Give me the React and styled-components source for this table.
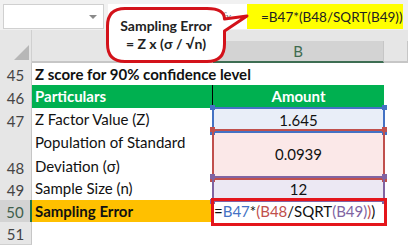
import React from 'react';
import styled, { createGlobalStyle } from 'styled-components';

const GlobalStyle = createGlobalStyle`
  html, body {
    margin: 0;
    padding: 0;
    background: #fff;
  }
  body {
    width: 408px;
    height: 245px;
    overflow: hidden;
  }
`;

const FONT = '"Lato", "Open Sans", "Liberation Sans", sans-serif';
const COLS = '32px 181px 171px 24px';

const Sheet = styled.div`
  position: relative;
  width: 408px;
  height: 245px;
  overflow: hidden;
  background: #fff;
  font-family: ${FONT};
  color: #111;
`;

const FormulaBar = styled.div`
  height: 40px;
  box-sizing: border-box;
  padding: 4px 5px 0 3px;
  display: flex;
  align-items: flex-start;
  background: #f1f1f1;
`;

const NameBox = styled.div`
  width: 101px;
  height: 25px;
  box-sizing: border-box;
  background: #fff;
  border: 1px solid #d0d0d0;
  display: flex;
  align-items: center;
  justify-content: flex-end;
  padding-right: 6px;
`;

const Arrow = styled.span`
  width: 0;
  height: 0;
  border-left: 4px solid transparent;
  border-right: 4px solid transparent;
  border-top: 4px solid #8a8a8a;
`;

const FxZone = styled.div`
  flex: 1;
  height: 25px;
  margin-left: 4px;
  background: #fff;
  display: flex;
  align-items: center;
  justify-content: flex-end;
  padding-right: 16px;
`;

const Fx = styled.span`
  font-family: "Liberation Serif", serif;
  font-style: italic;
  font-size: 13px;
  color: #7a7a7a;
`;

const FormulaInput = styled.div`
  width: 156px;
  height: 25px;
  box-sizing: border-box;
  background: #ffff00;
  display: flex;
  align-items: center;
  padding-left: 14px;
  font-size: 13.5px;
  color: #222;
  white-space: nowrap;
`;

const Grid = styled.div`
  display: grid;
  grid-template-columns: ${COLS};
  height: ${(p) => p.$h}px;
`;

const HeaderRow = styled(Grid)`
  background: #e6e6e6;
  margin-top: -10px;
  height: 33px;
  align-items: end;
`;

const Corner = styled.div`
  height: 33px;
  display: flex;
  align-items: flex-end;
  justify-content: flex-end;
  padding: 0 2px 3px 0;
  box-sizing: border-box;
  border-right: 1px solid #d0d0d0;
`;

const ColHead = styled.div`
  height: 22px;
  box-sizing: border-box;
  display: flex;
  align-items: center;
  justify-content: center;
  font-size: 15px;
  background: ${(p) => (p.$active ? '#d3d3d3' : '#e6e6e6')};
  color: ${(p) => (p.$active ? '#3f6b50' : '#444')};
  border-bottom: 2px solid ${(p) => (p.$active ? '#3e6e53' : '#c6c6c6')};
  border-right: 1px solid #c6c6c6;
`;

const RowHead = styled.div`
  box-sizing: border-box;
  display: flex;
  align-items: flex-end;
  justify-content: center;
  padding-bottom: 1px;
  font-size: 15px;
  color: ${(p) => (p.$active ? '#3f5f4c' : '#444')};
  background: ${(p) => (p.$active ? '#d3d3d3' : '#e6e6e6')};
  border-right: ${(p) => (p.$active ? '2px solid #217346' : '1px solid #c6c6c6')};
  border-bottom: 1px solid #d0d0d0;
`;

const Cell = styled.div`
  position: relative;
  box-sizing: border-box;
  display: flex;
  align-items: ${(p) => (p.$bottom ? 'flex-end' : 'center')};
  justify-content: ${(p) => (p.$center ? 'center' : 'flex-start')};
  padding: 0 3px;
  font-size: 15px;
  line-height: 23px;
  white-space: nowrap;
  font-weight: ${(p) => (p.$bold ? 700 : 400)};
  background: ${(p) => p.$bg || '#fff'};
  color: ${(p) => p.$color || '#111'};
  border-bottom: ${(p) => (p.$line ? '1px solid #000' : 'none')};
  border-right: ${(p) => (p.$divide ? '1px solid #000' : 'none')};
  grid-column: ${(p) => (p.$span ? `span ${p.$span}` : 'auto')};
`;

const Filler = styled.div`
  background: #fff;
`;

const Wrap = styled.div`
  white-space: normal;
  line-height: 24px;
`;

const FormulaCell = styled(Cell)`
  padding-left: 1px;
`;

const Range = styled.div`
  position: absolute;
  inset: -1px;
  border: 2px solid ${(p) => p.$c};
  pointer-events: none;
  z-index: ${(p) => p.$z};
`;

const Handle = styled.span`
  position: absolute;
  width: 5px;
  height: 5px;
  background: ${(p) => p.$c};
  ${(p) => (p.$top ? 'top: -4px;' : 'bottom: -4px;')}
  ${(p) => (p.$left ? 'left: -4px;' : 'right: -4px;')}
`;

const ResultBox = styled.div`
  position: absolute;
  inset: -2px -3px -3px -2px;
  border: 3px solid #e4151b;
  pointer-events: none;
  z-index: 5;
`;

const Ref = styled.span`
  color: ${(p) => p.$c};
`;

const CalloutShape = styled.svg`
  position: absolute;
  left: 0;
  top: 0;
  pointer-events: none;
  z-index: 10;
`;

const CalloutText = styled.div`
  position: absolute;
  left: 107px;
  top: 8px;
  width: 118px;
  height: 54px;
  z-index: 11;
  display: flex;
  flex-direction: column;
  align-items: center;
  justify-content: center;
  font-size: 14px;
  font-weight: 700;
  line-height: 18px;
  color: #222;
`;

const TONES = {
  blue: { line: '#4472c4', bg: '#e9eef8', z: 2 },
  red: { line: '#c0504d', bg: '#fbe8e8', z: 3 },
  purple: { line: '#8064a2', bg: '#ece8f3', z: 4 },
};

function Highlight({ tone }) {
  const { line, z } = TONES[tone];
  return (
    <Range $c={line} $z={z}>
      <Handle $c={line} $top $left />
      <Handle $c={line} $top />
      <Handle $c={line} $left />
      <Handle $c={line} />
    </Range>
  );
}

function Formula() {
  return (
    <>
      =<Ref $c="#4472c4">B47</Ref>*<Ref $c="#c0504d">(B48</Ref>/SQRT
      <Ref $c="#8064a2">(B49)</Ref>
      <Ref $c="#c0504d">)</Ref>)
    </>
  );
}

const rows = [
  { n: 45, h: 22, a: 'Z score for 90% confidence level', kind: 'title' },
  { n: 46, h: 23, a: 'Particulars', b: 'Amount', kind: 'head' },
  { n: 47, h: 22, a: 'Z Factor Value (Z)', b: '1.645', tone: 'blue' },
  { n: 48, h: 47, a: 'Population of Standard', a2: 'Deviation (σ)', b: '0.0939', tone: 'red' },
  { n: 49, h: 23, a: 'Sample Size (n)', b: '12', tone: 'purple' },
  { n: 50, h: 22, a: 'Sampling Error', kind: 'result' },
  { n: 51, h: 23 },
];

function Row({ row }) {
  const { n, h, a, a2, b, kind, tone } = row;
  const active = kind === 'result';

  let cells;
  if (kind === 'title') {
    cells = (
      <Cell $bold $span={2}>
        {a}
      </Cell>
    );
  } else if (kind === 'head') {
    cells = (
      <>
        <Cell $bold $bg="#00b050" $color="#fff" $line $divide>
          {a}
        </Cell>
        <Cell $bold $bg="#00b050" $color="#fff" $line $center>
          {b}
        </Cell>
      </>
    );
  } else if (kind === 'result') {
    cells = (
      <>
        <Cell $bold $bg="#ffc000">
          {a}
        </Cell>
        <FormulaCell>
          <Formula />
          <ResultBox />
        </FormulaCell>
      </>
    );
  } else if (tone) {
    cells = (
      <>
        <Cell $line $divide $bottom={!!a2}>
          {a2 ? (
            <Wrap>
              {a}
              <br />
              {a2}
            </Wrap>
          ) : (
            a
          )}
        </Cell>
        <Cell $bg={TONES[tone].bg} $center>
          {b}
          <Highlight tone={tone} />
        </Cell>
      </>
    );
  } else {
    cells = (
      <>
        <Cell />
        <Cell />
      </>
    );
  }

  return (
    <Grid $h={h}>
      <RowHead $active={active}>{n}</RowHead>
      {cells}
      <Filler />
    </Grid>
  );
}

export default function App() {
  return (
    <Sheet>
      <GlobalStyle />
      <FormulaBar>
        <NameBox>
          <Arrow />
        </NameBox>
        <FxZone>
          <Fx>fx</Fx>
        </FxZone>
        <FormulaInput>=B47*(B48/SQRT(B49))</FormulaInput>
      </FormulaBar>
      <HeaderRow>
        <Corner>
          <svg width="15" height="15" viewBox="0 0 15 15">
            <polygon points="15,0 15,15 0,15" fill="#b7b7b7" />
          </svg>
        </Corner>
        <ColHead>A</ColHead>
        <ColHead $active>B</ColHead>
        <ColHead />
      </HeaderRow>
      {rows.map((r) => (
        <Row key={r.n} row={r} />
      ))}
      <CalloutShape width="260" height="70" viewBox="0 0 260 70">
        <path
          d="M125 8.5 H207 Q224.5 8.5 224.5 19 L247 16 L224.5 31 V44 Q224.5 61.5 207 61.5 H125 Q107.5 61.5 107.5 44 V26 Q107.5 8.5 125 8.5 Z"
          fill="#fff"
          stroke="#d3121a"
          strokeWidth="3"
          strokeLinejoin="round"
        />
      </CalloutShape>
      <CalloutText>
        <div>Sampling Error</div>
        <div>= Z x (σ / √n)</div>
      </CalloutText>
    </Sheet>
  );
}
